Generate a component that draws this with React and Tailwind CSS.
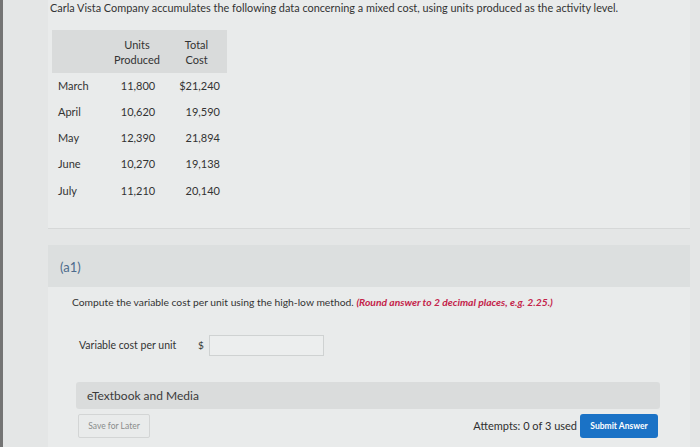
import React from "react";

const rows = [
  { month: "March", units: "11,800", cost: "$21,240" },
  { month: "April", units: "10,620", cost: "19,590" },
  { month: "May", units: "12,390", cost: "21,894" },
  { month: "June", units: "10,270", cost: "19,138" },
  { month: "July", units: "11,210", cost: "20,140" },
];

const App = () => {
  return (
    <div
      className="w-[700px] h-[447px] overflow-hidden flex bg-[#e4e6e6] text-[#333]"
      style={{ fontFamily: "Lato, 'Open Sans', sans-serif" }}
    >
      {/* left dark edge */}
      <div className="w-[3px] bg-[#747474]" />

      <div className="flex-1 flex flex-col pl-[45px] pr-[10px]">
        {/* QUESTION INTRO */}
        <div className="flex flex-col border-b border-[#d6d8d8] bg-[#e9ebeb] h-[229px]">
          <p className="text-[10.9px] leading-[13px] pt-[1px] pl-[2px]">
            Carla Vista Company accumulates the following data concerning a mixed cost, using units produced as the activity level.
          </p>

          <table className="mt-[16px] ml-[4px] w-[175px] text-[11px] border-collapse">
            <thead>
              <tr className="bg-[#d9dbdb] h-[43px]">
                <th className="w-[54px]" />
                <th className="font-normal leading-[15px] text-center w-[62px]">
                  Units
                  <br />
                  Produced
                </th>
                <th className="font-normal leading-[15px] text-center pr-[2px]">
                  Total
                  <br />
                  Cost
                </th>
              </tr>
            </thead>
            <tbody>
              {rows.map((r, i) => (
                <tr key={r.month} className={i === 0 ? "h-[22px] align-bottom" : "h-[26.3px] align-bottom"}>
                  <td className="pl-[6px] text-left pb-[1px]">{r.month}</td>
                  <td className="text-center pl-[2px] pb-[1px]">{r.units}</td>
                  <td className="text-right pr-[7px] pb-[1px]">{r.cost}</td>
                </tr>
              ))}
            </tbody>
          </table>
        </div>

        {/* PART A1 */}
        <div className="mt-[16px] flex-1 flex flex-col">
          <div className="h-[42px] bg-[#dcdfdf] flex items-center pl-[12px] pt-[4px]">
            <span className="text-[13px] text-[#4d6b8c]">(a1)</span>
          </div>

          <div className="flex-1 bg-[#e9ebeb] pl-[24px] pr-[30px] flex flex-col">
            <p className="text-[10.3px] mt-[9px] leading-[13px]">
              Compute the variable cost per unit using the high-low method.{" "}
              <span className="italic font-bold text-[#c4234a]">
                (Round answer to 2 decimal places, e.g. 2.25.)
              </span>
            </p>

            <div className="flex items-center mt-[26px] pl-[7px]">
              <span className="text-[10.5px] w-[119px]">Variable cost per unit</span>
              <span className="text-[10px] w-[11px]">$</span>
              <div className="w-[115px] h-[21px] border border-[#cfd2d2] bg-[#eceeee]" />
            </div>

            <div className="mt-[26px] ml-[4px] h-[27px] bg-[#dadcdc] rounded-[3px] flex items-center pl-[11px]">
              <span className="text-[12px] text-[#3a3a3a]">eTextbook and Media</span>
            </div>

            <div className="flex items-center justify-between ml-[6px] mt-[5px] pr-[2px]">
              <button className="w-[72px] h-[24px] border border-[#d3d5d5] rounded-[2px] bg-[#e9ebeb] text-[8.5px] text-[#8a8c8c]">
                Save for Later
              </button>
              <div className="flex items-center gap-[3px]">
                <span className="text-[11px] text-[#2f2f2f]">Attempts: 0 of 3 used</span>
                <button className="w-[78px] h-[24px] rounded-[3px] bg-[#1a72c6] text-white text-[8.5px] font-bold">
                  Submit Answer
                </button>
              </div>
            </div>
          </div>
        </div>
      </div>
    </div>
  );
};

export default App;
